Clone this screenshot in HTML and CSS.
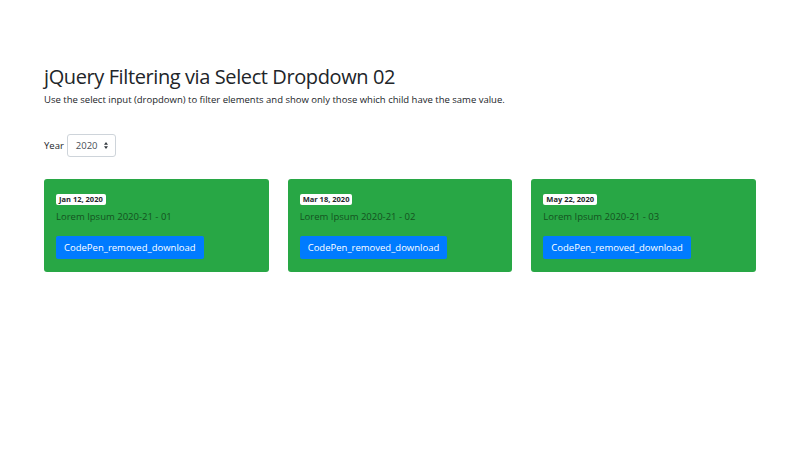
FILE: index.html
```html
<!DOCTYPE html>
<html lang="en">
<head>
  <meta charset="UTF-8">
  <title>jQuery Filtering via Select Dropdown 02</title>
  <link rel="stylesheet" href="styles.css">
</head>
<body>

  <div class="container">
    <h1>jQuery Filtering via Select Dropdown 02</h1>
    <p class="intro">Use the select input (dropdown) to filter elements and show only those which child have the same value.</p>

    <div class="filter">
      <label for="year">Year</label>
      <div class="select" id="year">
        <span>2020</span>
        <svg width="4" height="7" viewBox="0 0 4 7"><path d="M2 0 L4 2.8 H0 Z M2 7 L4 4.2 H0 Z" fill="#343a40"/></svg>
      </div>
    </div>

    <div class="cards">
      <div class="card">
        <span class="badge">Jan 12, 2020</span>
        <p class="title">Lorem Ipsum 2020-21 - 01</p>
        <a class="btn" href="#">CodePen_removed_download</a>
      </div>
      <div class="card">
        <span class="badge">Mar 18, 2020</span>
        <p class="title">Lorem Ipsum 2020-21 - 02</p>
        <a class="btn" href="#">CodePen_removed_download</a>
      </div>
      <div class="card">
        <span class="badge">May 22, 2020</span>
        <p class="title">Lorem Ipsum 2020-21 - 03</p>
        <a class="btn" href="#">CodePen_removed_download</a>
      </div>
    </div>
  </div>

</body>
</html>
```

FILE: styles.css
```css
body {
  margin: 0;
  font-family: "Open Sans", "Noto Sans", sans-serif;
  font-size: 9.5px;
  color: #212529;
  background: #fff;
}
/* Page container */
.container {
  width: 712px;
  margin: 0 auto;
  padding-top: 62px;
}
h1 {
  font-size: 20px;
  font-weight: 400;
  letter-spacing: -0.4px;
  line-height: 30px;
  margin: 0;
}
.intro {
  line-height: 15px;
  margin: 0;
}
/* Year filter */
.filter {
  display: flex;
  align-items: center;
  gap: 3px;
  margin-top: 27px;
}
.select {
  display: flex;
  align-items: center;
  gap: 6px;
  height: 23px;
  box-sizing: border-box;
  padding: 0 7px 0 8px;
  border: 1px solid #ced4da;
  border-radius: 3px;
  color: #495057;
}
/* Cards */
.cards {
  display: grid;
  grid-template-columns: repeat(3, 1fr);
  gap: 19px;
  margin-top: 22px;
}
.card {
  display: flex;
  flex-direction: column;
  align-items: flex-start;
  background-color: #28a745;
  border-radius: 3px;
  padding: 15px 12px 13px;
  height: 93px;
  box-sizing: border-box;
}
.badge {
  background: #fff;
  color: #212529;
  font-size: 7.5px;
  font-weight: 700;
  line-height: 11px;
  padding: 0 3px;
  border-radius: 2px;
}
.title {
  margin: 5px 0 12px;
  line-height: 14px;
  color: #14521f;
}
.btn {
  background-color: #007bff;
  color: #fff;
  line-height: 23px;
  padding: 0 8px;
  border-radius: 2px;
  text-decoration: none;
}
```
